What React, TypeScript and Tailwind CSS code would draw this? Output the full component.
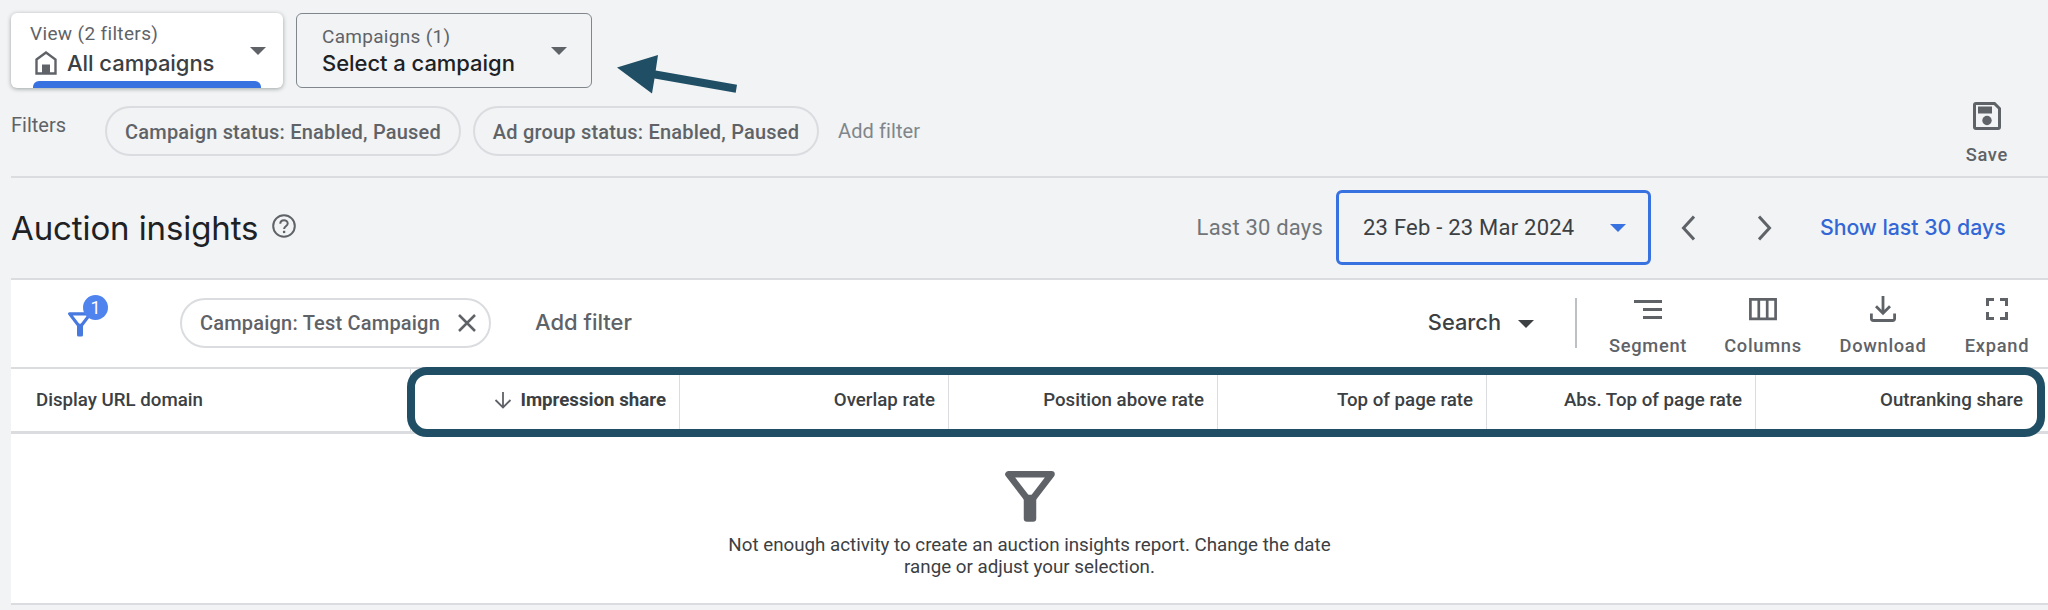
import type { ReactNode } from 'react';

const metrics = [
  { label: 'Overlap rate' },
  { label: 'Position above rate' },
  { label: 'Top of page rate' },
  { label: 'Abs. Top of page rate' },
];

function Caret({ className = '' }: { className?: string }) {
  return (
    <svg viewBox="0 0 16 8" className={`h-2 w-4 shrink-0 ${className}`} fill="currentColor">
      <path d="M0 0h16L8 8z" />
    </svg>
  );
}

function Funnel({ className = '' }: { className?: string }) {
  return (
    <svg viewBox="0 0 50 51" className={`shrink-0 ${className}`} fill="none" stroke="currentColor" strokeLinejoin="round">
      <path d="M3.5 3.3h43L27.5 28h-5z" strokeWidth="6.6" />
      <path d="M22 27h6v20.500h-6z" fill="currentColor" strokeWidth="6.500" />
    </svg>
  );
}

function Tool({ label, className = '', children }: { label: string; className?: string; children: ReactNode }) {
  return (
    <button className={`flex flex-col items-center ${className}`}>
      {children}
      <span className="mt-3 whitespace-nowrap text-[18.3px] leading-6 font-medium tracking-[0.7px]">{label}</span>
    </button>
  );
}

export default function App() {
  return (
    <div className="h-[610px] w-[2048px] overflow-hidden bg-[#f1f3f4] pl-[11px] font-['Roboto',sans-serif] text-[#5f6368]">
      {/* Scope selectors */}
      <div className="flex h-[106px] items-start pt-[13px]">
        <div className="relative flex h-[75px] w-[272px] justify-between rounded-md bg-white pr-[17px] pl-[19px] shadow-[0_1px_4px_rgba(60,64,67,0.45)]">
          <div className="pt-[9px]">
            <div className="text-[19px] leading-6 tracking-[0.35px]">View (2 filters)</div>
            <div className="mt-[2px] flex items-center pl-[5px]">
              <svg viewBox="0 0 22 24" className="h-6 w-[22px]" fill="none" stroke="currentColor" strokeWidth="2.400">
                <path d="M1.500 8.500 11 1.500l9.500 7v14h-19z" />
                <path d="M7 22.500V13.500h8v9z" fill="currentColor" stroke="none" />
              </svg>
              <span className="ml-[10px] whitespace-nowrap font-['Inter',sans-serif] text-[22px] leading-[30px] font-medium tracking-[-0.05px] text-[#3c4043]">All campaigns</span>
            </div>
          </div>
          <Caret className="mt-[34px]" />
          <div className="absolute bottom-0 left-[22px] h-[7px] w-[228px] rounded-t-md bg-[#3871e0]" />
        </div>

        <div className="ml-[13px] flex h-[75px] w-[296px] justify-between rounded-md border-[1.5px] border-[#80868b] pr-[24px] pl-[25px]">
          <div className="pt-[11px]">
            <div className="text-[19px] leading-6 tracking-[0.3px]">Campaigns (1)</div>
            <div className="-mt-px whitespace-nowrap font-['Inter',sans-serif] text-[22px] leading-[30px] font-medium tracking-[-0.05px] text-[#202124]">Select a campaign</div>
          </div>
          <Caret className="mt-[33px]" />
        </div>

        <svg viewBox="0 0 122 42" className="mt-[40px] ml-[24px] h-[42px] w-[122px]" fill="#1f4e65">
          <path d="M1 14.500 42 2l-2.300 15.500L121 31.700l-1.300 8L38.500 25.500 36 40.500z" />
        </svg>
      </div>

      {/* Filters */}
      <div className="flex h-[72px] items-start border-b-2 border-[#dadce0]">
        <span className="mt-[5px] w-[94px] text-[20px] leading-7">Filters</span>
        <div className="flex h-[50px] w-[356px] items-center justify-center rounded-full border-2 border-[#dadce0] pt-px text-[20px] font-medium tracking-[0.19px]">
          Campaign status: Enabled, Paused
        </div>
        <div className="ml-3 flex h-[50px] w-[346px] items-center justify-center rounded-full border-2 border-[#dadce0] pt-px text-[20px] font-medium tracking-[0.19px]">
          Ad group status: Enabled, Paused
        </div>
        <span className="ml-[19px] text-[20px] leading-[51px] tracking-[0.1px] text-[#80868b]">Add filter</span>
        <Tool label="Save" className="-mt-[4px] mr-[40px] ml-auto">
          <svg viewBox="0 0 28 28" className="mb-px h-7 w-7" fill="none" stroke="currentColor" strokeWidth="3">
            <path d="M3 1.500h18.500l5 5V25q0 1.500-1.500 1.500H3Q1.500 26.500 1.500 25V3Q1.500 1.500 3 1.500z" />
            <path d="M5 4.500h14v7H5z" fill="currentColor" stroke="none" />
            <circle cx="14" cy="18.500" r="4.700" fill="currentColor" stroke="none" />
          </svg>
        </Tool>
      </div>

      {/* Title and date range */}
      <div className="flex h-[99px] items-center">
        <h1 className="mt-px font-['Inter',sans-serif] text-[33px] leading-none tracking-[-0.1px] text-[#202124]">Auction insights</h1>
        <svg viewBox="0 0 24 24" className="-mt-1 ml-[14px] h-6 w-6" fill="none" stroke="currentColor" strokeWidth="2">
          <circle cx="12" cy="12" r="10.800" />
          <path d="M8.300 9.700c0-4.700 7.400-4.600 7.400-.2 0 2.600-3.600 3-3.600 5.500" />
          <path d="M12.100 16.800v2.300" strokeWidth="2.300" />
        </svg>
        <span className="ml-auto text-[22px] tracking-[0.2px] text-[#70757a]">Last 30 days</span>
        <div className="ml-[13px] flex h-[75px] w-[315px] items-center justify-between rounded-md border-3 border-[#3871e0] pr-[22px] pl-6">
          <span className="text-[22px] tracking-[0.23px] text-[#3c4043]">23 Feb - 23 Mar 2024</span>
          <Caret className="text-[#3871e0]" />
        </div>
        <svg viewBox="0 0 14 26" className="ml-[30px] h-[26px] w-[14px]" fill="none" stroke="currentColor" strokeWidth="3">
          <path d="M13 1.500 2.500 13 13 24.500" />
        </svg>
        <svg viewBox="0 0 14 26" className="ml-[63px] h-[26px] w-[14px]" fill="none" stroke="currentColor" strokeWidth="3">
          <path d="M1 1.500 11.500 13 1 24.500" />
        </svg>
        <span className="mr-[43px] ml-[48px] w-[185px] whitespace-nowrap font-['Inter',sans-serif] text-[21.3px] font-medium text-[#3367d6]">Show last 30 days</span>
      </div>

      {/* Report */}
      <div className="relative mt-px h-[327px] border-y-2 border-[#dadce0] bg-white">
        <div className="flex h-[87px] items-start">
          <div className="relative mt-[32px] ml-[57px] h-[25px] w-[24px] text-[#4779de]">
            <Funnel className="h-[25px] w-[24px]" />
            <span className="absolute -top-[17px] left-[15px] flex size-[25px] items-center justify-center rounded-full bg-[#4f83ee] text-[18px] text-white">1</span>
          </div>
          <div className="mt-[18px] ml-[88px] flex h-[50px] w-[311px] items-center justify-between rounded-full border-2 border-[#dadce0] pr-[13px] pl-[18px]">
            <span className="text-[20px] font-medium tracking-[0.2px]">Campaign: Test Campaign</span>
            <svg viewBox="0 0 18 18" className="h-[18px] w-[18px]" fill="none" stroke="currentColor" strokeWidth="2.500">
              <path d="m1 1 16 16M17 1 1 17" />
            </svg>
          </div>
          <span className="mt-[27px] ml-[44px] font-['Inter',sans-serif] text-[22px] leading-[30px] font-medium">Add filter</span>
          <span className="mt-[27px] ml-auto font-['Inter',sans-serif] text-[21.8px] leading-[30px] font-medium text-[#3c4043]">Search</span>
          <Caret className="mt-[40px] ml-[17px] text-[#3c4043]" />
          <div className="mt-[18px] ml-[41px] h-[50px] w-[2px] bg-[#bdc1c6]" />
          <div className="flex w-[471px] pt-[16px]">
            <Tool label="Segment" className="ml-[25px] w-[92px]">
              <svg viewBox="0 0 28 26" className="h-[26px] w-7" fill="currentColor">
                <path d="M0 4h28v3H0zM9 12h19v3H9zM9 20h19v3H9z" />
              </svg>
            </Tool>
            <Tool label="Columns" className="ml-[23px] w-[92px]">
              <svg viewBox="0 0 28 26" className="h-[26px] w-7" fill="none" stroke="currentColor" strokeWidth="2.700">
                <path d="M1.400 3.400h25.200v19.400H1.400zM9.800 3.400v19.400M18.200 3.400v19.400" />
              </svg>
            </Tool>
            <Tool label="Download" className="ml-[22px] w-[104px]">
              <svg viewBox="0 0 26 26" className="h-[26px] w-[26px]" fill="none" stroke="currentColor" strokeWidth="2.800">
                <path d="M13 0v16.500M6 10.200l7 7 7-7M1.400 17.500v5q0 2 2 2h19.200q2 0 2-2v-5" />
              </svg>
            </Tool>
            <Tool label="Expand" className="ml-[19px] w-[86px]">
              <svg viewBox="0 0 22 26" className="h-[26px] w-[22px]" fill="none" stroke="currentColor" strokeWidth="3">
                <path d="M1.500 10V3.500H8M14 3.500h6.500V10M20.500 16v6.500H14M8 22.500H1.500V16" />
              </svg>
            </Tool>
          </div>
        </div>

        <div className="flex h-[67px] items-stretch border-t-2 border-b-3 border-[#dadce0] text-[18.7px] leading-[62px] font-medium text-[#3c4043]">
          <div className="w-[400px] border-r border-[#dadce0] pl-[25px]">Display URL domain</div>
          <div className="flex w-[269px] items-center justify-end border-r border-[#dadce0] pr-[13px] font-bold">
            <svg viewBox="0 0 18 18" className="mr-2 h-[18px] w-[18px] text-[#5f6368]" fill="none" stroke="currentColor" strokeWidth="1.800">
              <path d="M9 1v15.500M1.500 9 9 16.500 16.500 9" />
            </svg>
            Impression share
          </div>
          {metrics.map((metric) => (
            <div key={metric.label} className="w-[269px] border-r border-[#dadce0] pr-[13px] text-right">
              {metric.label}
            </div>
          ))}
          <div className="flex-1 pr-[25px] text-right">Outranking share</div>
        </div>

        {/* Highlight around the metric columns */}
        <div className="absolute top-[87px] left-[396px] h-[70px] w-[1638px] rounded-[20px] border-8 border-[#1f4e65]" />

        <div className="flex flex-col items-center pt-[37px]">
          <Funnel className="h-[51px] w-[50px]" />
          <p className="mt-[12px] w-[640px] text-center text-[18.75px] leading-[22px] text-[#3c4043]">
            Not enough activity to create an auction insights report. Change the date
            <br />
            range or adjust your selection.
          </p>
        </div>
      </div>
    </div>
  );
}
